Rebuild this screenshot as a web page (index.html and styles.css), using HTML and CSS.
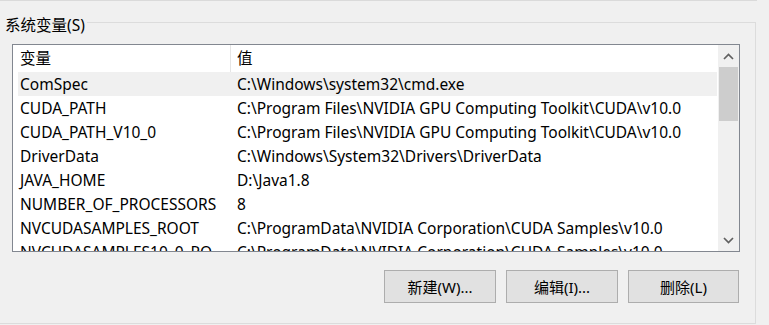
FILE: index.html
```html
<!DOCTYPE html>
<html lang="zh-CN">
<head>
<meta charset="utf-8">
<title>系统变量</title>
<link rel="stylesheet" href="styles.css">
</head>
<body>
<div class="topline"></div>
<fieldset class="group">
  <legend class="group-title">系统变量(S)</legend>
  <div class="listview">
    <div class="list">
      <div class="header">
        <div class="cell c1 hcell">变量</div>
        <div class="cell c2">值</div>
      </div>
      <div class="row sel"><div class="cell c1">ComSpec</div><div class="cell c2">C:\Windows\system32\cmd.exe</div></div>
      <div class="row"><div class="cell c1">CUDA_PATH</div><div class="cell c2">C:\Program Files\NVIDIA GPU Computing Toolkit\CUDA\v10.0</div></div>
      <div class="row"><div class="cell c1">CUDA_PATH_V10_0</div><div class="cell c2">C:\Program Files\NVIDIA GPU Computing Toolkit\CUDA\v10.0</div></div>
      <div class="row"><div class="cell c1">DriverData</div><div class="cell c2">C:\Windows\System32\Drivers\DriverData</div></div>
      <div class="row"><div class="cell c1">JAVA_HOME</div><div class="cell c2">D:\Java1.8</div></div>
      <div class="row"><div class="cell c1">NUMBER_OF_PROCESSORS</div><div class="cell c2">8</div></div>
      <div class="row"><div class="cell c1">NVCUDASAMPLES_ROOT</div><div class="cell c2">C:\ProgramData\NVIDIA Corporation\CUDA Samples\v10.0</div></div>
      <div class="row"><div class="cell c1">NVCUDASAMPLES10_0_ROOT</div><div class="cell c2">C:\ProgramData\NVIDIA Corporation\CUDA Samples\v10.0</div></div>
    </div>
    <div class="scrollbar">
      <div class="arrow">
        <svg width="11" height="7" viewBox="0 0 11 7"><polyline points="1,6 5.5,1.5 10,6" fill="none" stroke="#606060" stroke-width="1.7"/></svg>
      </div>
      <div class="track"><div class="thumb"></div></div>
      <div class="arrow">
        <svg width="11" height="7" viewBox="0 0 11 7"><polyline points="1,1 5.5,5.5 10,1" fill="none" stroke="#606060" stroke-width="1.7"/></svg>
      </div>
    </div>
  </div>
  <div class="buttons">
    <button class="btn">新建(W)...</button>
    <button class="btn">编辑(I)...</button>
    <button class="btn btn-last">删除(L)</button>
  </div>
</fieldset>
</body>
</html>
```

FILE: styles.css
```css
html, body {
  margin: 0;
  padding: 0;
  background: #f0f0f0;
  width: 769px;
  height: 325px;
  overflow: hidden;
  font-family: "Noto Sans", "Noto Sans CJK SC", sans-serif;
  font-size: 15.5px;
  color: #000;
}
.topline {
  width: 757px;
  height: 1px;
  background: #dadada;
}
.group {
  box-sizing: border-box;
  margin: 10px 0 0 -1px;
  padding: 0;
  width: 757px;
  height: 313px;
  border: 1px solid #dcdcdc;
  min-width: 0;
}
.group-title {
  margin: 0;
  padding: 6px 2px 0 5px;
  line-height: 16px;
  font-size: 15.5px;
}
.listview {
  box-sizing: border-box;
  margin: 11px 0 0 12px;
  width: 728px;
  height: 208px;
  border: 1px solid #828790;
  background: #fff;
  display: flex;
}
.list {
  flex: 1;
  overflow: hidden;
}
.header {
  display: flex;
  height: 27px;
  background: #fff;
}
.row {
  display: flex;
  height: 24px;
  margin-left: 5px;
}
.row.sel {
  background: #f0f0f0;
}
.cell {
  white-space: nowrap;
  line-height: 24px;
}
.header .cell {
  line-height: 27px;
}
.c1 {
  box-sizing: border-box;
  width: 218px;
  flex: none;
  padding-left: 7px;
  overflow: hidden;
  text-overflow: ellipsis;
}
.row .c1 {
  width: 213px;
  padding-left: 2px;
  padding-right: 2px;
}
.hcell {
  border-right: 1px solid #e5e5e5;
}
.c2 {
  padding-left: 6px;
}
.scrollbar {
  box-sizing: border-box;
  width: 22px;
  flex: none;
  background: #f0f0f0;
  display: flex;
  flex-direction: column;
  border-left: 1px solid #fff;
}
.arrow {
  height: 22px;
  display: flex;
  align-items: center;
  justify-content: center;
  flex: none;
}
.track {
  flex: 1;
  padding-left: 1px;
}
.thumb {
  width: 19px;
  height: 54px;
  background: #cdcdcd;
}
.buttons {
  display: flex;
  justify-content: flex-end;
  gap: 10px;
  margin-top: 18px;
  padding-right: 16px;
}
.btn {
  box-sizing: border-box;
  width: 112px;
  height: 33px;
  background: #e1e1e1;
  border: 1px solid #adadad;
  font-family: "Noto Sans", "Noto Sans CJK SC", sans-serif;
  font-size: 15px;
  color: #000;
  padding: 0;
}
.btn-last {
  width: 111px;
}
```
